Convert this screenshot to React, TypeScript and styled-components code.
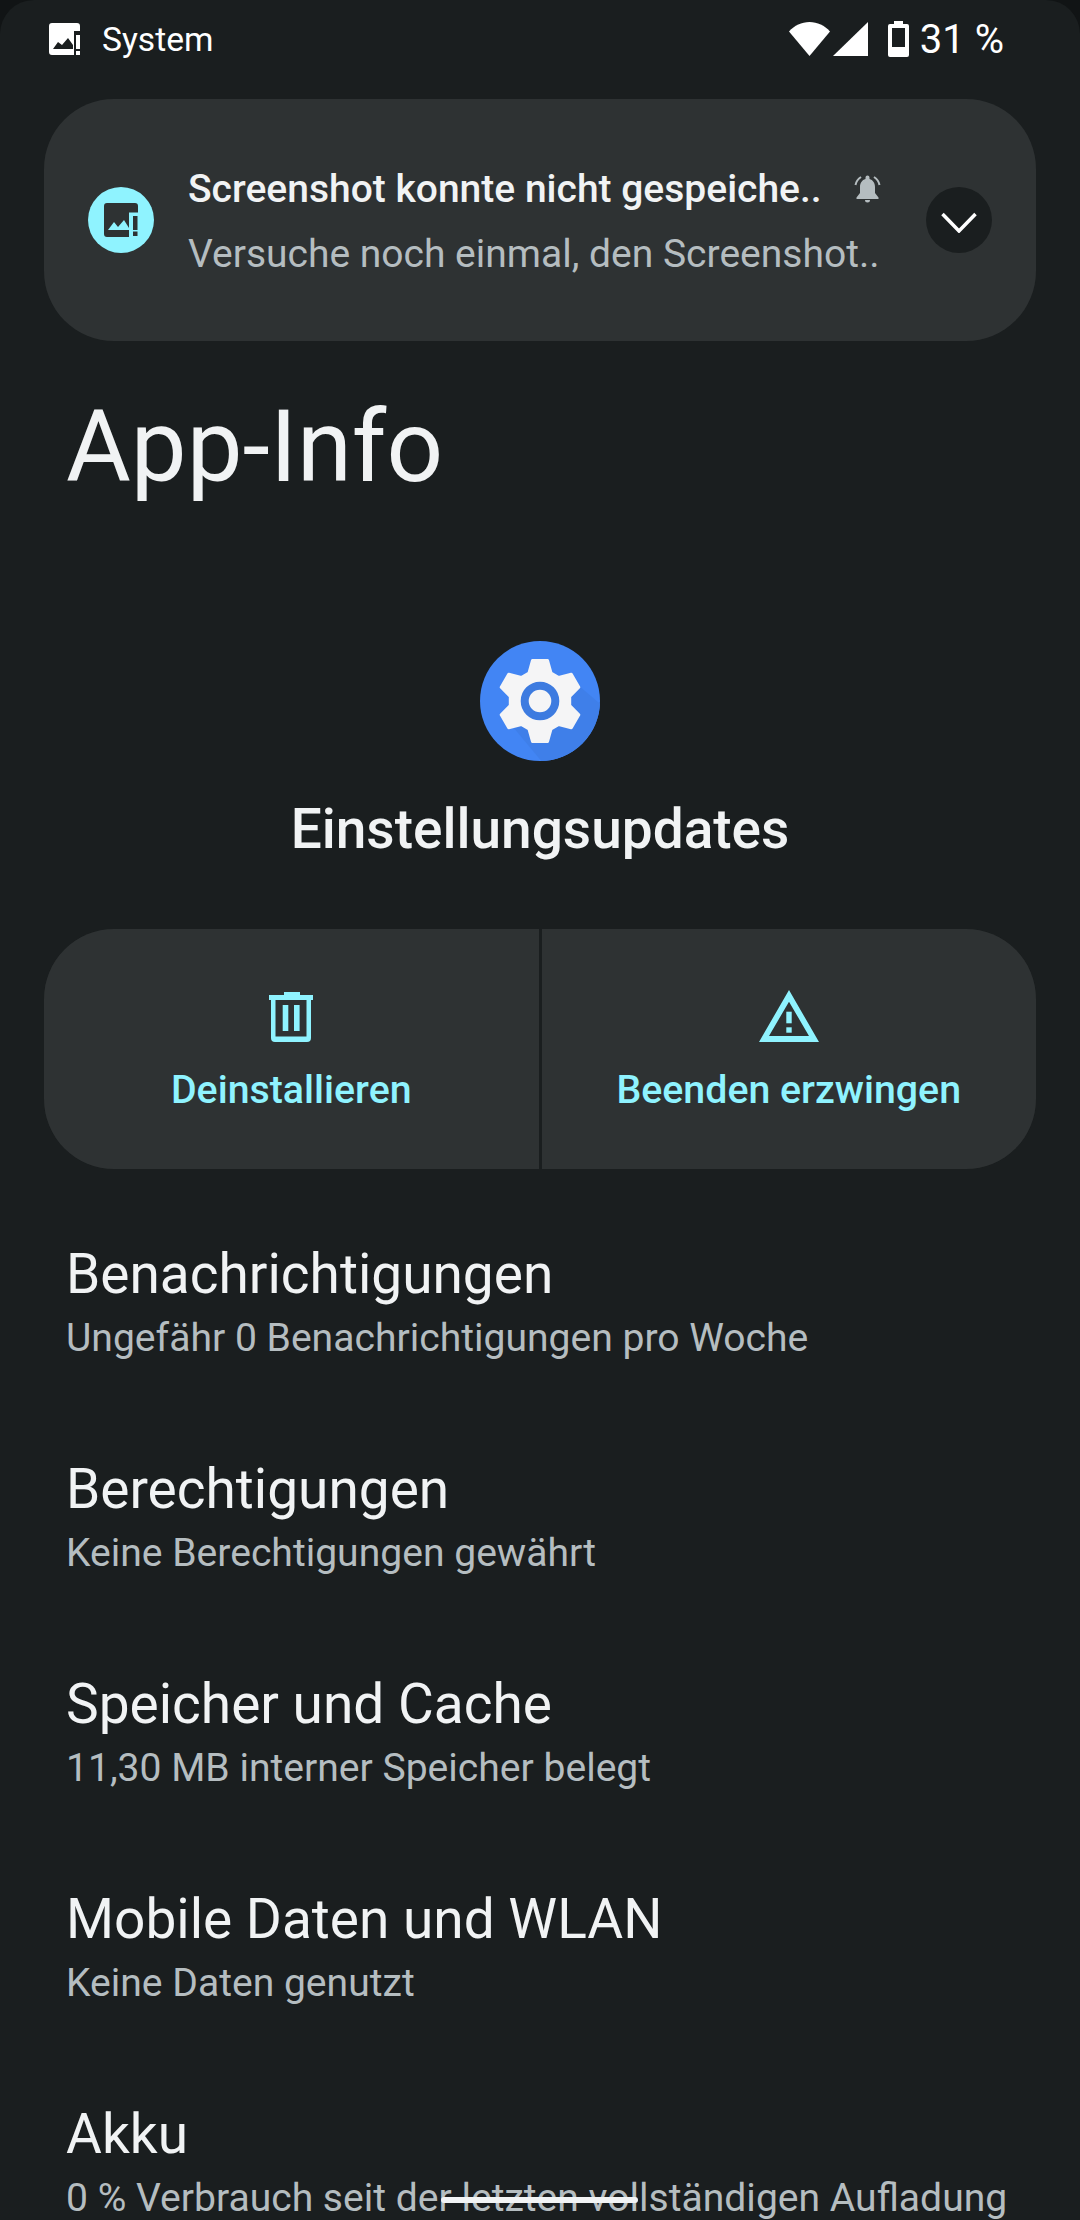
import React from 'react';
import styled, { createGlobalStyle } from 'styled-components';

const GlobalStyle = createGlobalStyle`
	html, body {
		margin: 0;
		padding: 0;
		background: #111415;
	}
	* {
		box-sizing: border-box;
	}
`;

const Screen = styled.div`
	position: relative;
	width: 1080px;
	height: 2220px;
	overflow: hidden;
	background: #1a1e1f;
	border-radius: 34px 34px 0 0;
	color: #f1f3f4;
	font-family: Roboto, 'Liberation Sans', sans-serif;
`;

const StatusBar = styled.div`
	display: flex;
	align-items: center;
	justify-content: space-between;
	height: 78px;
	padding: 0 76px 0 49px;
`;

const StatusGroup = styled.div`
	display: flex;
	align-items: center;
`;

const StatusLabel = styled.span`
	margin-left: 21px;
	font-size: 33.6px;
	color: #fff;
`;

const StatusValue = styled.span`
	margin-left: 11px;
	font-size: 40px;
	color: #fff;
	font-weight: 400;
`;

const Card = styled.div`
	background: #2e3233;
	border-radius: 70px;
	margin: 0 44px;
`;

const NotificationCard = styled(Card)`
	display: flex;
	align-items: center;
	height: 242px;
	margin-top: 21px;
	padding: 0 44px;
`;

const IconCircle = styled.div<{ $bg: string }>`
	display: flex;
	align-items: center;
	justify-content: center;
	flex: none;
	width: 66px;
	height: 66px;
	border-radius: 50%;
	background: ${(props) => props.$bg};
`;

const NotificationBody = styled.div`
	flex: 1;
	margin-left: 34px;
	padding-top: 2px;
`;

const NotificationTitleRow = styled.div`
	display: flex;
	align-items: center;
	height: 46px;
	margin-bottom: 19px;
`;

const NotificationTitle = styled.span`
	font-size: 39px;
	font-weight: 500;
	color: #f1f3f4;
	white-space: nowrap;
`;

const BellWrap = styled.span`
	display: flex;
	margin-left: 32px;
`;

const NotificationText = styled.div`
	font-size: 39px;
	line-height: 46px;
	color: #b5bdc0;
	white-space: nowrap;
`;

const PageTitle = styled.h1`
	margin: 50px 0 0 66px;
	font-size: 99.4px;
	line-height: 112px;
	font-weight: 400;
	color: #f1f3f4;
`;

const AppHeader = styled.div`
	display: flex;
	flex-direction: column;
	align-items: center;
	margin-top: 138px;
`;

const AppName = styled.div`
	margin-top: 38px;
	font-size: 55px;
	line-height: 60px;
	font-weight: 500;
	color: #f1f3f4;
`;

const ActionCard = styled(Card)`
	display: flex;
	height: 240px;
	margin-top: 70px;
	overflow: hidden;
	gap: 3px;
	background: #1a1e1f;
`;

const ActionButton = styled.div`
	flex: 1;
	display: flex;
	flex-direction: column;
	align-items: center;
	padding-top: 61px;
	background: #2e3233;
`;

const ActionIconSlot = styled.div`
	display: flex;
	align-items: flex-end;
	height: 52px;
`;

const ActionLabel = styled.div`
	margin-top: 24px;
	font-size: 39.3px;
	line-height: 48px;
	font-weight: 500;
	color: #8ff3ff;
`;

const SettingsList = styled.div`
	margin-top: 62px;
	padding-left: 66px;
`;

const SettingsRow = styled.div`
	height: 215px;
	padding-top: 12px;
`;

const RowTitle = styled.div`
	font-size: 55px;
	line-height: 62px;
	color: #f1f3f4;
`;

const RowSubtitle = styled.div`
	margin-top: 8px;
	font-size: 39.1px;
	line-height: 50px;
	color: #b5bdc0;
	white-space: nowrap;
`;

const GestureBar = styled.div`
	position: absolute;
	left: 441px;
	top: 2197px;
	width: 197px;
	height: 6px;
	border-radius: 3px;
	background: #f1f3f4;
`;

const StatusImageIcon = () => (
	<svg width="32" height="32" viewBox="0 0 32 32">
		<path fill="#fff" d="M3 0h25a3 3 0 0 1 3 3v5h-6v24H3a3 3 0 0 1-3-3V3a3 3 0 0 1 3-3z" />
		<rect x="27" y="12" width="4" height="14" fill="#fff" />
		<rect x="27" y="28" width="4" height="4" fill="#fff" />
		<path fill="#1a1e1f" d="M4 26l5-7 4 3 6-7 5 7v4z" />
	</svg>
);

const NotifIcon = () => (
	<svg width="34" height="34" viewBox="0 0 34 34">
		<path fill="#2e3233" d="M3 0h28a3 3 0 0 1 3 3v6.500h-9v24.500H3a3 3 0 0 1-3-3V3a3 3 0 0 1 3-3z" />
		<rect x="29" y="13" width="4.500" height="14" fill="#2e3233" />
		<rect x="29" y="28.500" width="4.500" height="4.500" fill="#2e3233" />
		<path fill="#8ff3ff" d="M4 27l6-8 4 5 6-7 5 8v2z" />
	</svg>
);

const gearPoints = () => {
	const pts: string[] = [];
	for (let k = 0; k < 6; k += 1) {
		const a = ((-90 + 60 * k) * Math.PI) / 180;
		const at = (r: number, off: number) => {
			const x = 60 + r * Math.cos(a) - off * Math.sin(a);
			const y = 60 + r * Math.sin(a) + off * Math.cos(a);
			return `${x.toFixed(1)},${y.toFixed(1)}`;
		};
		pts.push(at(28, -11), at(40.5, -7.5), at(40.5, 7.5), at(28, 11));
	}
	return pts.join(' ');
};

const GearIcon = () => (
	<svg width="120" height="120" viewBox="0 0 120 120">
		<defs>
			<clipPath id="gearClip">
				<circle cx="60" cy="60" r="60" />
			</clipPath>
		</defs>
		<circle cx="60" cy="60" r="60" fill="#4285f4" />
		<path clipPath="url(#gearClip)" fill="#3f7fe9" d="M98 44l27 23v61H68L33 86z" />
		<polygon points={gearPoints()} fill="#f5f5f6" stroke="#f5f5f6" strokeWidth="3" strokeLinejoin="round" />
		<circle cx="60" cy="60" r="15.300" fill="none" stroke="#3d7be0" strokeWidth="8" />
	</svg>
);

const rows = [
	['Benachrichtigungen', 'Ungefähr 0 Benachrichtigungen pro Woche'],
	['Berechtigungen', 'Keine Berechtigungen gewährt'],
	['Speicher und Cache', '11,30 MB interner Speicher belegt'],
	['Mobile Daten und WLAN', 'Keine Daten genutzt'],
	['Akku', '0 % Verbrauch seit der letzten vollständigen Aufladung'],
];

const App: React.FC = () => (
	<>
		<GlobalStyle />
		<Screen>
			<StatusBar>
				<StatusGroup>
					<StatusImageIcon />
					<StatusLabel>System</StatusLabel>
				</StatusGroup>
				<StatusGroup>
					<svg width="41" height="34" viewBox="0 0 41 34">
						<path fill="#fff" d="M20.500 34L0 9.500C5.500 3.500 12.500 0 20.500 0s15 3.500 20.500 9.500z" />
					</svg>
					<svg width="35" height="34" viewBox="0 0 35 34" style={{ marginLeft: 3 }}>
						<path fill="#fff" d="M35 0v34H0z" />
					</svg>
					<svg width="21" height="36" viewBox="0 0 21 36" style={{ marginLeft: 20 }}>
						<path
							fill="#fff"
							fillRule="evenodd"
							d="M6 0h9v3h4a2 2 0 0 1 2 2v29a2 2 0 0 1-2 2H2a2 2 0 0 1-2-2V5a2 2 0 0 1 2-2h4zM4 7v19h13V7z"
						/>
					</svg>
					<StatusValue>31 %</StatusValue>
				</StatusGroup>
			</StatusBar>

			<NotificationCard>
				<IconCircle $bg="#8ff3ff">
					<NotifIcon />
				</IconCircle>
				<NotificationBody>
					<NotificationTitleRow>
						<NotificationTitle>Screenshot konnte nicht gespeiche..</NotificationTitle>
						<BellWrap>
							<svg width="27" height="28" viewBox="0 0 27 28">
								<path
									fill="#b5bdc0"
									d="M13.500.500a2 2 0 0 1 2 2V4c3.500 1 5.500 4 5.500 8v6l3.500 4.500V24h-22v-1.500L6 18v-6c0-4 2-7 5.500-8V2.500a2 2 0 0 1 2-2zM11 25h5a2.500 2.500 0 0 1-5 0z"
								/>
								<path
									fill="none"
									stroke="#b5bdc0"
									strokeWidth="2"
									d="M7 2C4 4 2 7 1.500 10M20 2c3 2 5 5 5.500 8"
								/>
							</svg>
						</BellWrap>
					</NotificationTitleRow>
					<NotificationText>Versuche noch einmal, den Screenshot..</NotificationText>
				</NotificationBody>
				<IconCircle $bg="#1a1e1f">
					<svg width="36" height="26" viewBox="0 -5 36 26">
						<path fill="none" stroke="#fff" strokeWidth="3.500" d="M1.500 2L18 19 34.500 2" />
					</svg>
				</IconCircle>
			</NotificationCard>

			<PageTitle>App-Info</PageTitle>

			<AppHeader>
				<GearIcon />
				<AppName>Einstellungsupdates</AppName>
			</AppHeader>

			<ActionCard>
				<ActionButton>
					<ActionIconSlot>
						<svg width="44" height="50" viewBox="0 0 44 50">
							<path
								fill="#8ff3ff"
								fillRule="evenodd"
								d="M15 0h16v3h13v5h-2v38a4 4 0 0 1-4 4H6a4 4 0 0 1-4-4V8H0V3h15zM6.500 8v36.500h31V8z"
							/>
							<rect x="13.700" y="13" width="5.600" height="26" fill="#8ff3ff" />
							<rect x="25" y="13" width="5.600" height="26" fill="#8ff3ff" />
						</svg>
					</ActionIconSlot>
					<ActionLabel>Deinstallieren</ActionLabel>
				</ActionButton>
				<ActionButton>
					<ActionIconSlot>
						<svg width="60" height="52" viewBox="0 0 60 52">
							<path
								fill="#8ff3ff"
								fillRule="evenodd"
								d="M30 0l30 52H0zM30 11.700L10 46h40z"
							/>
							<rect x="27.300" y="21.700" width="5.400" height="11.600" fill="#8ff3ff" />
							<rect x="27.300" y="37.300" width="5.400" height="5.400" fill="#8ff3ff" />
						</svg>
					</ActionIconSlot>
					<ActionLabel>Beenden erzwingen</ActionLabel>
				</ActionButton>
			</ActionCard>

			<SettingsList>
				{rows.map(([title, subtitle]) => (
					<SettingsRow key={title}>
						<RowTitle>{title}</RowTitle>
						<RowSubtitle>{subtitle}</RowSubtitle>
					</SettingsRow>
				))}
			</SettingsList>

			<GestureBar />
		</Screen>
	</>
);

export default App;
